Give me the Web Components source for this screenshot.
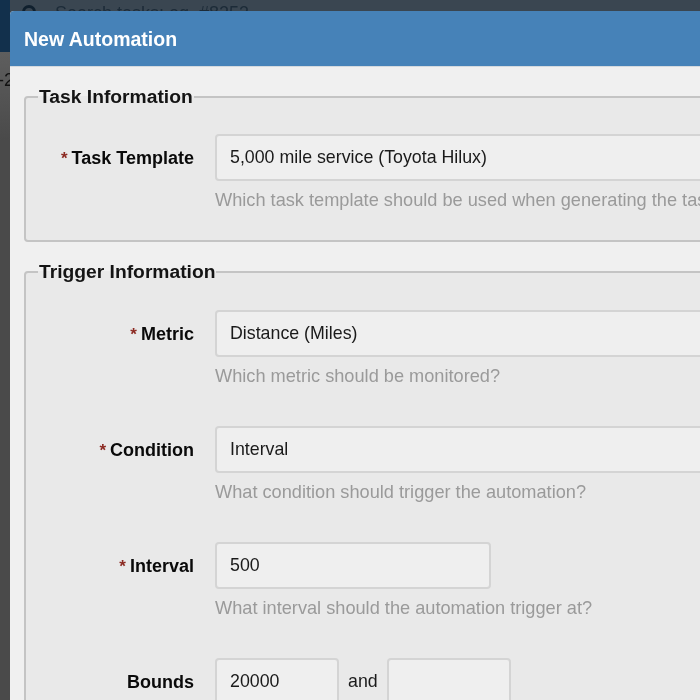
<!DOCTYPE html>
<html>
<head>
<meta charset="utf-8">
<title>New Automation</title>
<style>
  html, body { margin: 0; height: 100%; overflow: hidden; background: #4a4a4a; }
  body { font-family: 'Liberation Sans', Arial, sans-serif; }
</style>
</head>
<body>
<page-backdrop>
  <automation-modal heading="New Automation">
    <form-section legend="Task Information" style="--section-pad-bottom: 28px">
      <form-row label="Task Template" required help="Which task template should be used when generating the task?">
        <text-field value="5,000 mile service (Toyota Hilux)"></text-field>
      </form-row>
    </form-section>
    <form-section legend="Trigger Information" style="--section-pad-top: 27px; --section-pad-bottom: 60px">
      <form-row label="Metric" required help="Which metric should be monitored?">
        <text-field value="Distance (Miles)"></text-field>
      </form-row>
      <form-row label="Condition" required help="What condition should trigger the automation?">
        <text-field value="Interval"></text-field>
      </form-row>
      <form-row label="Interval" required help="What interval should the automation trigger at?">
        <text-field size="small" value="500"></text-field>
      </form-row>
      <form-row label="Bounds">
        <text-field size="tiny" value="20000"></text-field>
        <span>and</span>
        <text-field size="tiny"></text-field>
      </form-row>
    </form-section>
  </automation-modal>
</page-backdrop>

<script>
class PageBackdrop extends HTMLElement {
  constructor() {
    super();
    this.attachShadow({ mode: 'open' });
    this.shadowRoot.innerHTML = `
      <style>
        :host { display: block; position: relative; width: 700px; height: 700px; overflow: hidden; background: linear-gradient(#5e5e5e 52px, #4a4a4a 140px); filter: blur(0.35px); }
        .topbar { height: 52px; background: linear-gradient(90deg, #12304c 10px, #3a4651 10px); color: #1c2b38; font-size: 18px; display: flex; gap: 16px; padding-left: 22px; }
        .topbar svg { margin-top: 5px; }
        .topbar span { line-height: 26px; }
        .peek { position: absolute; left: -2px; top: 70px; font-size: 18px; color: #111; }
        .overlay { position: absolute; left: 10px; top: 11px; right: -60px; bottom: -60px; }
      </style>
      <div class="topbar">
        <svg width="17" height="20" viewBox="0 0 17 20" fill="none" stroke="#10202e" stroke-width="3"><circle cx="7" cy="7" r="5.5"/><path d="M11 11L15 16"/></svg>
        <span>Search tasks: eg. #8253</span>
      </div>
      <div class="peek">-2</div>
      <div class="overlay"><slot></slot></div>`;
  }
}

class AutomationModal extends HTMLElement {
  constructor() {
    super();
    this.attachShadow({ mode: 'open' });
    this.shadowRoot.innerHTML = `
      <style>
        :host { display: block; height: 100%; background: #f0f0f0; border-radius: 4px 0 0 0; overflow: hidden; }
        header { height: 56px; box-sizing: border-box; background: #4682b8; color: #fff; font-size: 19.5px; font-weight: bold; line-height: 56px; padding-left: 14px; border-bottom: 1px solid #d4d9de; }
        .body { padding: 19px 0 0 14px; }
      </style>
      <header></header>
      <div class="body"><slot></slot></div>`;
    this.shadowRoot.querySelector('header').textContent = this.getAttribute('heading');
  }
}

class FormSection extends HTMLElement {
  constructor() {
    super();
    this.attachShadow({ mode: 'open' });
    this.shadowRoot.innerHTML = `
      <style>
        :host { display: block; margin-bottom: 19px; }
        fieldset { margin: 0; padding: var(--section-pad-top, 26px) 0 var(--section-pad-bottom, 0) 0; border: 2px solid #c4c4c4; border-radius: 4px; background: #e9e9e9; }
        legend { margin-left: 12px; padding: 0 1px; font-size: 19.25px; font-weight: bold; color: #141414; line-height: 22px; }
        .rows { display: grid; row-gap: 38px; }
      </style>
      <fieldset><legend></legend><div class="rows"><slot></slot></div></fieldset>`;
    this.shadowRoot.querySelector('legend').textContent = this.getAttribute('legend');
  }
}

class FormRow extends HTMLElement {
  constructor() {
    super();
    this.attachShadow({ mode: 'open' });
    this.shadowRoot.innerHTML = `
      <style>
        :host { display: grid; grid-template-columns: 168px 1fr; column-gap: 21px; }
        label { height: 47px; font-size: 18px; font-weight: bold; color: #0a0a0a; text-align: right; line-height: 48px; }
        .req { color: #8c2a22; font-size: 17px; margin-right: 4px; }
        .controls { display: flex; align-items: center; gap: 9px; font-size: 17.8px; color: #1a1a1a; }
        .help { grid-column: 2; font-size: 18.2px; line-height: 24px; color: #9a9a9a; margin-top: 7px; white-space: nowrap; }
      </style>
      <label></label>
      <div class="controls"><slot></slot></div>`;
    const label = this.shadowRoot.querySelector('label');
    if (this.hasAttribute('required')) {
      const star = document.createElement('span');
      star.className = 'req';
      star.textContent = '*';
      label.appendChild(star);
    }
    label.appendChild(document.createTextNode(this.getAttribute('label')));
    if (this.hasAttribute('help')) {
      const help = document.createElement('div');
      help.className = 'help';
      help.textContent = this.getAttribute('help');
      this.shadowRoot.appendChild(help);
    }
  }
}

class TextField extends HTMLElement {
  constructor() {
    super();
    this.attachShadow({ mode: 'open' });
    this.shadowRoot.innerHTML = `
      <style>
        :host { display: block; flex: 0 0 auto; width: 600px; height: 47px; box-sizing: border-box; border: 2px solid #d4d4d4; border-radius: 4px; background: #efefef; color: #1a1a1a; font-size: 17.8px; line-height: 43px; padding-left: 13px; white-space: nowrap; }
        :host([size="small"]) { width: 276px; }
        :host([size="tiny"]) { width: 124px; }
      </style>
      <span></span>`;
    this.shadowRoot.querySelector('span').textContent = this.getAttribute('value') || '';
  }
}

customElements.define('page-backdrop', PageBackdrop);
customElements.define('automation-modal', AutomationModal);
customElements.define('form-section', FormSection);
customElements.define('form-row', FormRow);
customElements.define('text-field', TextField);
</script>
</body>
</html>
